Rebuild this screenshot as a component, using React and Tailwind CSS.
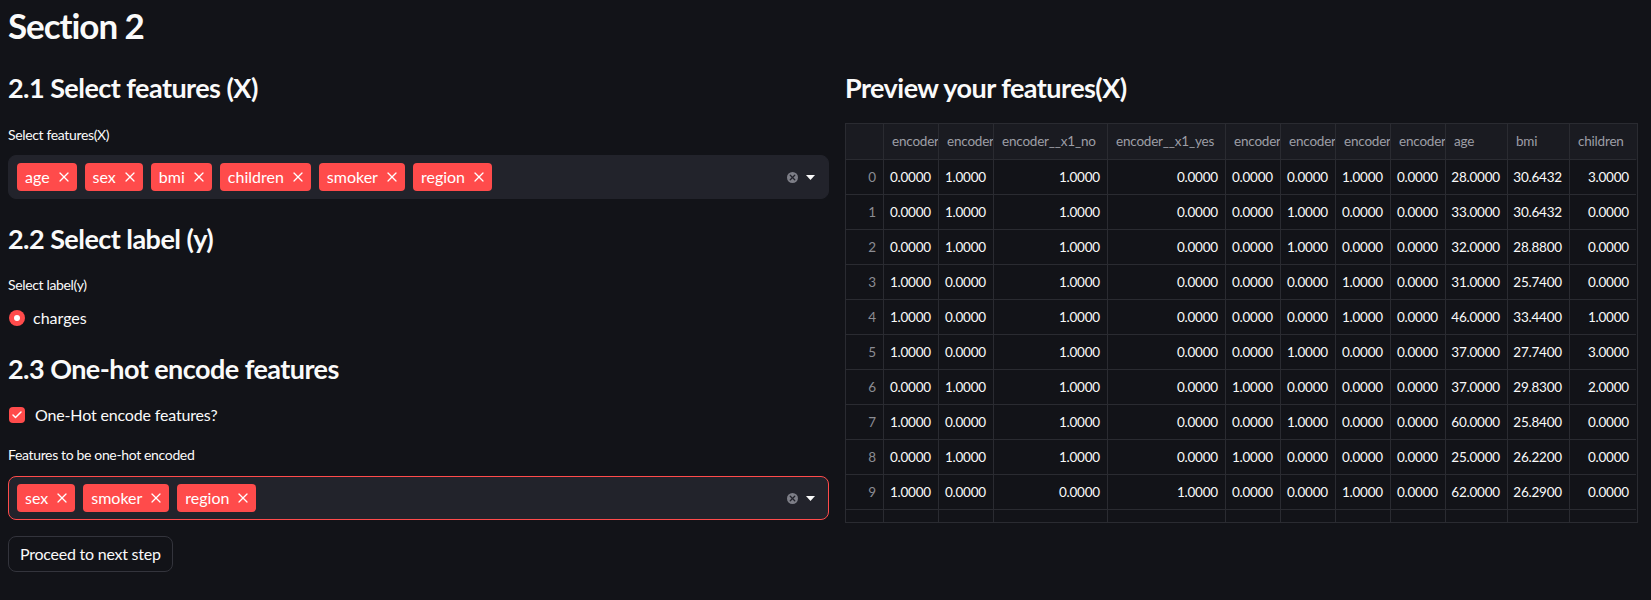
import { X, Check } from "lucide-react";

const FONT = { fontFamily: '"Source Sans Pro", Lato, "Noto Sans", sans-serif' };

const COLS = [
  { label: "", w: "w-[38px]" },
  { label: "encoder", w: "w-[55px]" },
  { label: "encoder", w: "w-[55px]" },
  { label: "encoder__x1_no", w: "w-[114px]" },
  { label: "encoder__x1_yes", w: "w-[118px]" },
  { label: "encoder", w: "w-[55px]" },
  { label: "encoder", w: "w-[55px]" },
  { label: "encoder", w: "w-[55px]" },
  { label: "encoder", w: "w-[55px]" },
  { label: "age", w: "w-[62px]" },
  { label: "bmi", w: "w-[62px]" },
  { label: "children", w: "w-[66px]" },
];

const ROWS = [
  ["0.0000", "1.0000", "1.0000", "0.0000", "0.0000", "0.0000", "1.0000", "0.0000", "28.0000", "30.6432", "3.0000"],
  ["0.0000", "1.0000", "1.0000", "0.0000", "0.0000", "1.0000", "0.0000", "0.0000", "33.0000", "30.6432", "0.0000"],
  ["0.0000", "1.0000", "1.0000", "0.0000", "0.0000", "1.0000", "0.0000", "0.0000", "32.0000", "28.8800", "0.0000"],
  ["1.0000", "0.0000", "1.0000", "0.0000", "0.0000", "0.0000", "1.0000", "0.0000", "31.0000", "25.7400", "0.0000"],
  ["1.0000", "0.0000", "1.0000", "0.0000", "0.0000", "0.0000", "1.0000", "0.0000", "46.0000", "33.4400", "1.0000"],
  ["1.0000", "0.0000", "1.0000", "0.0000", "0.0000", "1.0000", "0.0000", "0.0000", "37.0000", "27.7400", "3.0000"],
  ["0.0000", "1.0000", "1.0000", "0.0000", "1.0000", "0.0000", "0.0000", "0.0000", "37.0000", "29.8300", "2.0000"],
  ["1.0000", "0.0000", "1.0000", "0.0000", "0.0000", "1.0000", "0.0000", "0.0000", "60.0000", "25.8400", "0.0000"],
  ["0.0000", "1.0000", "1.0000", "0.0000", "1.0000", "0.0000", "0.0000", "0.0000", "25.0000", "26.2200", "0.0000"],
  ["1.0000", "0.0000", "0.0000", "1.0000", "0.0000", "0.0000", "1.0000", "0.0000", "62.0000", "26.2900", "0.0000"],
  ["1.0000", "0.0000", "1.0000", "0.0000", "0.0000", "0.0000", "1.0000", "0.0000", "23.0000", "34.4000", "0.0000"],
];

function Tag({ label }) {
  return (
    <span className="flex items-center h-[28px] pl-[8px] pr-[5px] gap-[6px] rounded-[4px] bg-[#ff4b4b] text-white text-[16px]">
      {label}
      <X size={16} strokeWidth={1.8} />
    </span>
  );
}

function MultiSelect({ tags, focused }) {
  return (
    <div
      className={
        "flex items-center h-[44px] pl-[8px] pr-[13px] rounded-[8px] bg-[#22232b] border " +
        (focused ? "border-[#ff4b4b]" : "border-[#22232b]")
      }
    >
      <div className="flex items-center gap-[8px] flex-1">
        {tags.map((t) => (
          <Tag key={t} label={t} />
        ))}
      </div>
      <div className="flex items-center gap-[8px]">
        <span className="w-[11px] h-[11px] rounded-full bg-[#7d7e87] flex items-center justify-center">
          <X size={9} strokeWidth={3.5} className="text-[#22232b]" />
        </span>
        <svg width="9" height="5" viewBox="0 0 9 5">
          <path d="M0 0h9L4.5 5z" fill="#fafafa" />
        </svg>
      </div>
    </div>
  );
}

function Label({ children, className = "" }) {
  return (
    <p className={"text-[14px] leading-[20px] tracking-[-0.025em] text-[#fafafa] " + className}>{children}</p>
  );
}

function H3({ children, className = "" }) {
  return (
    <h3 className={"text-[27px] leading-[34px] tracking-[-0.02em] font-bold text-[#fafafa] " + className}>
      {children}
    </h3>
  );
}

function Preview() {
  return (
    <div className="h-[400px] w-[793px] overflow-hidden border border-[#2a2b31] text-[13.5px] tracking-[-0.015em]">
      <div className="flex bg-[#1a1b21]">
        {COLS.map((c, i) => (
          <div
            key={i}
            className={
              c.w +
              " h-[36px] shrink-0 px-[8px] flex items-center overflow-hidden whitespace-nowrap text-[#9d9ea6] border-b border-[#2a2b31] " +
              (i < COLS.length - 1 ? "border-r" : "")
            }
          >
            {c.label}
          </div>
        ))}
      </div>
      {ROWS.map((r, ri) => (
        <div key={ri} className="flex">
          {[String(ri), ...r].map((v, i) => (
            <div
              key={i}
              className={
                COLS[i].w +
                " h-[35px] shrink-0 px-[7px] flex items-center justify-end overflow-hidden whitespace-nowrap border-b border-[#2a2b31] " +
                (i === 0 ? "text-[#8b8c93] " : "text-[#fafafa] ") +
                (i < COLS.length - 1 ? "border-r" : "")
              }
            >
              {v}
            </div>
          ))}
        </div>
      ))}
    </div>
  );
}

export default function App() {
  return (
    <div className="min-h-[600px] bg-[#121318] text-[#fafafa] pl-[8px]" style={FONT}>
      <h1 className="pt-[4px] text-[35px] leading-[43px] tracking-[-0.03em] font-bold">Section 2</h1>

      <div className="flex gap-[16px] mt-[24px]">
        {/* left column */}
        <div className="w-[821px] shrink-0 flex flex-col">
          <H3>2.1 Select features (X)</H3>
          <Label className="mt-[20px]">Select features(X)</Label>
          <div className="mt-[10px]">
            <MultiSelect tags={["age", "sex", "bmi", "children", "smoker", "region"]} />
          </div>

          <H3 className="mt-[23px]">2.2 Select label (y)</H3>
          <Label className="mt-[19px]">Select label(y)</Label>
          <div className="mt-[11px] h-[24px] flex items-center gap-[8px]">
            <span className="ml-[1px] w-[16px] h-[16px] rounded-full bg-[#ff4b4b] flex items-center justify-center">
              <span className="w-[6px] h-[6px] rounded-full bg-white" />
            </span>
            <span className="text-[16px]">charges</span>
          </div>

          <H3 className="mt-[22px]">2.3 One-hot encode features</H3>
          <div className="mt-[17px] h-[24px] flex items-center gap-[10px]">
            <span className="ml-[1px] w-[16px] h-[16px] rounded-[4px] bg-[#ff4b4b] flex items-center justify-center">
              <Check size={12} strokeWidth={3} className="text-white" />
            </span>
            <span className="text-[16px] tracking-[-0.01em]">One-Hot encode features?</span>
          </div>

          <Label className="mt-[18px]">Features to be one-hot encoded</Label>
          <div className="mt-[11px]">
            <MultiSelect tags={["sex", "smoker", "region"]} focused />
          </div>

          <div className="mt-[16px]">
            <button className="h-[36px] px-[11px] rounded-[8px] border border-[#33343c] bg-[#121318] text-[16px] tracking-[-0.015em] text-[#fafafa]">
              Proceed to next step
            </button>
          </div>
        </div>

        {/* right column */}
        <div className="flex flex-col">
          <H3>Preview your features(X)</H3>
          <div className="mt-[18px]">
            <Preview />
          </div>
        </div>
      </div>
    </div>
  );
}
